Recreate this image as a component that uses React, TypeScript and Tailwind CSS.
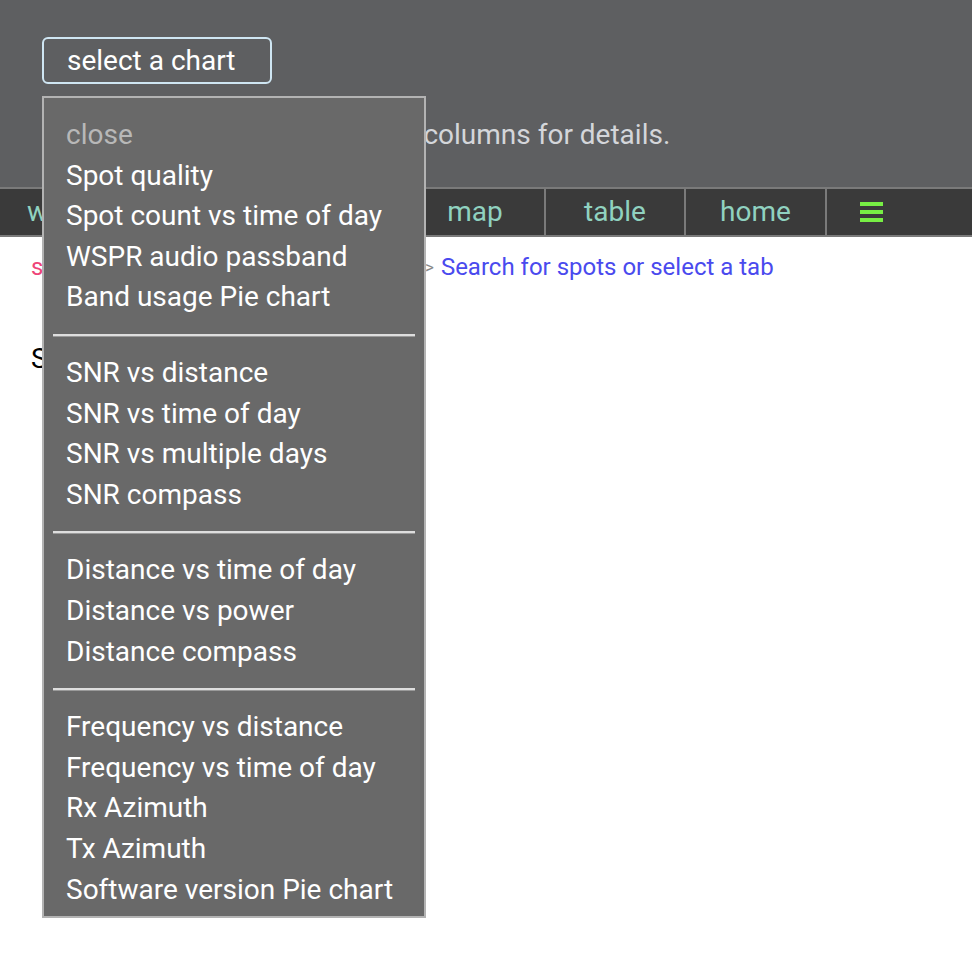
import React from "react";

const groups: string[][] = [
  ["Spot quality", "Spot count vs time of day", "WSPR audio passband", "Band usage Pie chart"],
  ["SNR vs distance", "SNR vs time of day", "SNR vs multiple days", "SNR compass"],
  ["Distance vs time of day", "Distance vs power", "Distance compass"],
  ["Frequency vs distance", "Frequency vs time of day", "Rx Azimuth", "Tx Azimuth", "Software version Pie chart"],
];

export default function App() {
  return (
    <div className="relative min-h-[962px] bg-white" style={{ fontFamily: "Roboto, 'Noto Sans', sans-serif" }}>
      <header className="h-[187px] bg-[#5e5f61] pl-[42px] pt-[37px]">
        <button className="block h-[47px] w-[230px] rounded-[6px] border-2 border-[#cfe6f3] pl-[23px] text-left text-[28px] leading-[42px] text-white">
          select a chart
        </button>
        <p className="mt-[31px] pl-[20px] text-[28px] leading-[40px] text-[#d4d6da]">
          Click on the bars in the chart columns for details.
        </p>
      </header>
      <nav className="flex h-[50px] border-y-2 border-[#7a7a7a] bg-[#3a3a3a] text-[28px] leading-[46px] text-[#90d2c0]">
        <div className="w-[124px] pl-[27px]">wspr</div>
        <div className="w-[140px] border-l-2 border-[#7a7a7a] text-center">spots</div>
        <div className="w-[140px] border-l-2 border-[#7a7a7a] text-center">charts</div>
        <div className="w-[140px] border-l-2 border-[#7a7a7a] text-center">map</div>
        <div className="w-[140px] border-l-2 border-[#7a7a7a] text-center">table</div>
        <div className="w-[141px] border-l-2 border-[#7a7a7a] text-center">home</div>
        <div className="flex flex-1 items-center border-l-2 border-[#7a7a7a] pl-[33px]">
          <div className="flex w-[23px] flex-col gap-[4px]">
            <span className="block h-[4px] bg-[#77ee44]" />
            <span className="block h-[4px] bg-[#77ee44]" />
            <span className="block h-[4px] bg-[#77ee44]" />
          </div>
        </div>
      </nav>
      <main className="pl-[31px]">
        <div className="mt-[14px] flex items-center text-[24px] leading-[32px]">
          <span className="w-[394px] text-[#ee4477]">spots</span>
          <span className="mr-[7px] text-[17px] text-[#888888]">&gt;</span>
          <span className="text-[#4a4aee]">Search for spots or select a tab</span>
        </div>
        <h2 className="mt-[56px] text-[28px] leading-[40px] text-black">Select a chart</h2>
      </main>

      <div className="absolute left-[42px] top-[96px] w-[384px] border-2 border-[#b3b3b3] bg-[#696969] pb-[6px] pt-[17px] text-[28px] leading-[40.6px] text-white">
        <div className="pl-[22px] text-[#b8b8b8]">close</div>
        {groups.map((g, gi) => (
          <div key={gi}>
            {gi > 0 && (
              <div className="mx-[9px] my-[16px] h-[3px] border-b border-[#9a9a9a] bg-[#dedede]" />
            )}
            {g.map((item) => (
              <div key={item} className="whitespace-nowrap pl-[22px]">
                {item}
              </div>
            ))}
          </div>
        ))}
      </div>
    </div>
  );
}
